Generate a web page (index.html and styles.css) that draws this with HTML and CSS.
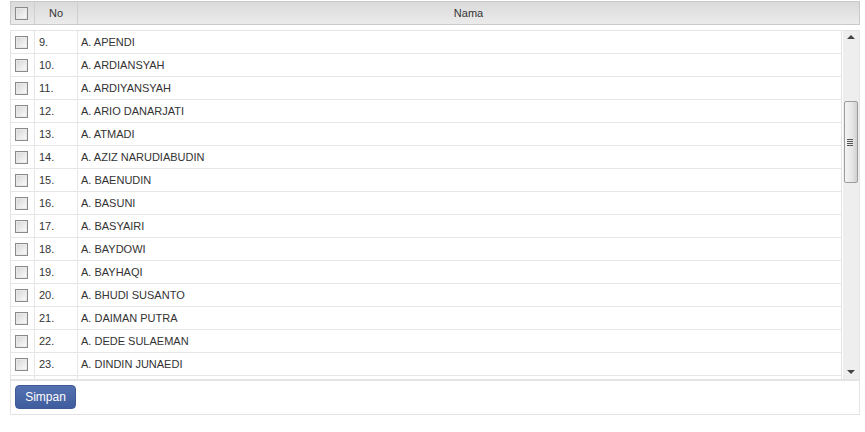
FILE: index.html
```html
<!DOCTYPE html>
<html>
<head>
<meta charset="utf-8">
<link rel="stylesheet" href="styles.css">
</head>
<body>
<div class="wrap">
  <div class="grid-head">
    <div class="c-chk"><span class="cb"></span></div>
    <div class="c-no">No</div>
    <div class="c-name">Nama</div>
  </div>
  <div class="grid-body">
    <div class="rows">
      <div class="row"><div class="c-chk"><span class="cb"></span></div><div class="c-no">9.</div><div class="c-name">A. APENDI</div></div>
      <div class="row"><div class="c-chk"><span class="cb"></span></div><div class="c-no">10.</div><div class="c-name">A. ARDIANSYAH</div></div>
      <div class="row"><div class="c-chk"><span class="cb"></span></div><div class="c-no">11.</div><div class="c-name">A. ARDIYANSYAH</div></div>
      <div class="row"><div class="c-chk"><span class="cb"></span></div><div class="c-no">12.</div><div class="c-name">A. ARIO DANARJATI</div></div>
      <div class="row"><div class="c-chk"><span class="cb"></span></div><div class="c-no">13.</div><div class="c-name">A. ATMADI</div></div>
      <div class="row"><div class="c-chk"><span class="cb"></span></div><div class="c-no">14.</div><div class="c-name">A. AZIZ NARUDIABUDIN</div></div>
      <div class="row"><div class="c-chk"><span class="cb"></span></div><div class="c-no">15.</div><div class="c-name">A. BAENUDIN</div></div>
      <div class="row"><div class="c-chk"><span class="cb"></span></div><div class="c-no">16.</div><div class="c-name">A. BASUNI</div></div>
      <div class="row"><div class="c-chk"><span class="cb"></span></div><div class="c-no">17.</div><div class="c-name">A. BASYAIRI</div></div>
      <div class="row"><div class="c-chk"><span class="cb"></span></div><div class="c-no">18.</div><div class="c-name">A. BAYDOWI</div></div>
      <div class="row"><div class="c-chk"><span class="cb"></span></div><div class="c-no">19.</div><div class="c-name">A. BAYHAQI</div></div>
      <div class="row"><div class="c-chk"><span class="cb"></span></div><div class="c-no">20.</div><div class="c-name">A. BHUDI SUSANTO</div></div>
      <div class="row"><div class="c-chk"><span class="cb"></span></div><div class="c-no">21.</div><div class="c-name">A. DAIMAN PUTRA</div></div>
      <div class="row"><div class="c-chk"><span class="cb"></span></div><div class="c-no">22.</div><div class="c-name">A. DEDE SULAEMAN</div></div>
      <div class="row"><div class="c-chk"><span class="cb"></span></div><div class="c-no">23.</div><div class="c-name">A. DINDIN JUNAEDI</div></div>
      <div class="row row-partial"><div class="c-chk"></div><div class="c-no"></div><div class="c-name"></div></div>
    </div>
    <div class="sbar">
      <div class="arrow up"></div>
      <div class="track">
        <div class="thumb"><span class="grip"></span></div>
      </div>
      <div class="arrow down"></div>
    </div>
  </div>
  <div class="grid-foot">
    <div class="btn" role="button"><span class="btn-label">Simpan</span></div>
  </div>
</div>
</body>
</html>
```
FILE: styles.css
```css
html, body {
  margin: 0;
  padding: 0;
  background: #fff;
}
body {
  font-family: "Liberation Sans", Arial, sans-serif;
  font-size: 11px;
  color: #333;
}
.wrap {
  width: 850px;
  padding: 1px 0 0 10px;
}
.grid-head {
  display: flex;
  height: 22px;
  border: 1px solid #c9c9c9;
  background: linear-gradient(#dadada, #ebebeb);
  color: #333;
}
.grid-head > div {
  display: flex;
  align-items: center;
  justify-content: center;
}
.c-chk {
  width: 24px;
  flex: none;
  border-right: 1px solid #d0d0d0;
  display: flex;
  align-items: center;
  padding-left: 4px;
  box-sizing: border-box;
}
.grid-head .c-chk { justify-content: flex-start; }
.c-no {
  width: 43px;
  flex: none;
  border-right: 1px solid #d0d0d0;
  box-sizing: border-box;
}
.c-name {
  flex: 1;
}
.cb {
  width: 11px;
  height: 11px;
  border: 1px solid #8a8a8a;
  background: linear-gradient(135deg, #d4d4d4, #fdfdfd);
  box-shadow: inset 0 0 0 1px #e8e8e8;
  display: block;
}
.grid-body {
  margin-top: 5px;
  height: 348px;
  border: 1px solid #e4e4e4;
  display: flex;
  overflow: hidden;
}
.rows {
  flex: 1;
  border-right: 1px solid #e4e4e4;
  overflow: hidden;
}
.row {
  display: flex;
  height: 22px;
  border-bottom: 1px solid #e6e6e6;
}
.row-partial {
  height: 3px;
  border-bottom: 0;
}
.row .c-chk, .row .c-no {
  border-right-color: #e6e6e6;
}
.row .c-no {
  display: flex;
  align-items: center;
  padding-left: 4px;
}
.row .c-name {
  display: flex;
  align-items: center;
  padding-left: 3px;
}
.sbar {
  width: 16px;
  flex: none;
  background: #eeeeee;
  display: flex;
  flex-direction: column;
  margin-left: 1px;
}
.arrow {
  height: 16px;
  flex: none;
  display: flex;
  justify-content: center;
}
.arrow.up::before {
  content: "";
  margin-top: 4px;
  width: 0;
  height: 0;
  border-left: 4px solid transparent;
  border-right: 4px solid transparent;
  border-bottom: 4px solid #444;
}
.arrow.down { align-items: flex-end; }
.arrow.down::before {
  content: "";
  margin-bottom: 5px;
  width: 0;
  height: 0;
  border-left: 4px solid transparent;
  border-right: 4px solid transparent;
  border-top: 4px solid #444;
}
.track {
  flex: 1;
  padding-top: 54px;
}
.thumb {
  margin-left: 1px;
  width: 12px;
  height: 80px;
  border: 1px solid #9c9c9c;
  border-radius: 2px;
  background: linear-gradient(90deg, #f4f4f4, #e6e6e6 60%, #d0d0d0);
  display: flex;
  align-items: center;
  justify-content: center;
}
.grip {
  width: 6px;
  height: 7px;
  background: repeating-linear-gradient(#555 0, #555 1px, transparent 1px, transparent 2px);
  margin-left: -2px;
}
.grid-foot {
  height: 29px;
  border: 1px solid #e4e4e4;
  padding: 4px 0 0 4px;
}
.btn {
  width: 59px;
  height: 22px;
  border: 1px solid #3f5a96;
  border-radius: 4px;
  background: linear-gradient(#5470b0, #3f5d9e);
  display: flex;
  align-items: center;
  justify-content: center;
}
.btn-label {
  color: #fff;
  font-size: 12px;
  line-height: 14px;
  white-space: nowrap;
}
```
